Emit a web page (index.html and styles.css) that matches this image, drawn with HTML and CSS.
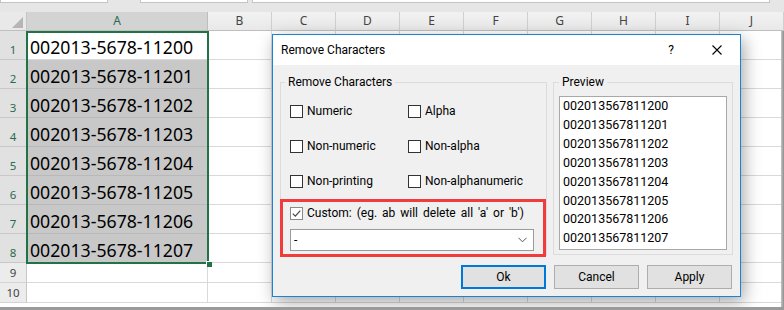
FILE: index.html
```html
<!DOCTYPE html>
<html>
<head>
<meta charset="utf-8">
<link rel="stylesheet" href="styles.css">
</head>
<body>
<div class="app">
  <div class="ribbon">
    <div class="rbox w1"></div>
    <div class="rbox w2"></div>
    <div class="rbox w3"></div>
  </div>
  <div class="sheet">
    <div class="ch corner"><span class="tri"></span></div>
    <div class="ch on">A</div>
    <div class="ch">B</div><div class="ch">C</div><div class="ch">D</div><div class="ch">E</div><div class="ch">F</div><div class="ch">G</div><div class="ch">H</div><div class="ch">I</div><div class="ch">J</div>

    <div class="rh on">1</div><div class="c a">002013-5678-11200</div>
    <div class="c"></div><div class="c"></div><div class="c"></div><div class="c"></div><div class="c"></div><div class="c"></div><div class="c"></div><div class="c"></div><div class="c"></div>

    <div class="rh on">2</div><div class="c a sel">002013-5678-11201</div>
    <div class="c"></div><div class="c"></div><div class="c"></div><div class="c"></div><div class="c"></div><div class="c"></div><div class="c"></div><div class="c"></div><div class="c"></div>

    <div class="rh on">3</div><div class="c a sel">002013-5678-11202</div>
    <div class="c"></div><div class="c"></div><div class="c"></div><div class="c"></div><div class="c"></div><div class="c"></div><div class="c"></div><div class="c"></div><div class="c"></div>

    <div class="rh on">4</div><div class="c a sel">002013-5678-11203</div>
    <div class="c"></div><div class="c"></div><div class="c"></div><div class="c"></div><div class="c"></div><div class="c"></div><div class="c"></div><div class="c"></div><div class="c"></div>

    <div class="rh on">5</div><div class="c a sel">002013-5678-11204</div>
    <div class="c"></div><div class="c"></div><div class="c"></div><div class="c"></div><div class="c"></div><div class="c"></div><div class="c"></div><div class="c"></div><div class="c"></div>

    <div class="rh on">6</div><div class="c a sel">002013-5678-11205</div>
    <div class="c"></div><div class="c"></div><div class="c"></div><div class="c"></div><div class="c"></div><div class="c"></div><div class="c"></div><div class="c"></div><div class="c"></div>

    <div class="rh on">7</div><div class="c a sel">002013-5678-11206</div>
    <div class="c"></div><div class="c"></div><div class="c"></div><div class="c"></div><div class="c"></div><div class="c"></div><div class="c"></div><div class="c"></div><div class="c"></div>

    <div class="rh on">8</div><div class="c a sel">002013-5678-11207</div>
    <div class="c"></div><div class="c"></div><div class="c"></div><div class="c"></div><div class="c"></div><div class="c"></div><div class="c"></div><div class="c"></div><div class="c"></div>

    <div class="rh">9</div><div class="c"></div>
    <div class="c"></div><div class="c"></div><div class="c"></div><div class="c"></div><div class="c"></div><div class="c"></div><div class="c"></div><div class="c"></div><div class="c"></div>

    <div class="rh">10</div><div class="c"></div>
    <div class="c"></div><div class="c"></div><div class="c"></div><div class="c"></div><div class="c"></div><div class="c"></div><div class="c"></div><div class="c"></div><div class="c"></div>
  </div>

  <div class="selection"><span class="handle"></span></div>

  <div class="dialog">
    <div class="titlebar">
      <span class="title">Remove Characters</span>
      <span class="help">?</span>
      <svg class="close" width="10" height="10" viewBox="0 0 10 10"><path d="M0.5 0.5 L9.5 9.5 M9.5 0.5 L0.5 9.5" stroke="#000" stroke-width="1.1" fill="none"/></svg>
    </div>
    <div class="dbody">
      <div class="groups">
        <div class="group g-left">
          <div class="legend lg-left">Remove Characters</div>
          <div class="opts">
            <div class="opt"><span class="cb"></span>Numeric</div>
            <div class="opt"><span class="cb"></span>Alpha</div>
            <div class="opt"><span class="cb"></span>Non-numeric</div>
            <div class="opt"><span class="cb"></span>Non-alpha</div>
            <div class="opt"><span class="cb"></span>Non-printing</div>
            <div class="opt"><span class="cb"></span>Non-alphanumeric</div>
          </div>
          <div class="custom">
            <div class="opt custom-row">
              <span class="cb checked"><svg width="11" height="11" viewBox="0 0 11 11"><path d="M1.8 5.6 L4.3 8.2 L9.3 2.6" stroke="#444" stroke-width="1.2" fill="none"/></svg></span><span class="custom-text">Custom: (eg. ab will delete all 'a' or 'b')</span>
            </div>
            <div class="combo">
              <span class="combo-val">-</span>
              <svg width="9" height="6" viewBox="0 0 9 6"><path d="M0.5 0.8 L4.5 4.8 L8.5 0.8" stroke="#555" stroke-width="1" fill="none"/></svg>
            </div>
          </div>
        </div>
        <div class="group g-right">
          <div class="legend lg-right">Preview</div>
          <div class="listbox">
            <div>002013567811200</div>
            <div>002013567811201</div>
            <div>002013567811202</div>
            <div>002013567811203</div>
            <div>002013567811204</div>
            <div>002013567811205</div>
            <div>002013567811206</div>
            <div>002013567811207</div>
          </div>
        </div>
      </div>
      <div class="btns">
        <div class="btn default">Ok</div>
        <div class="btn">Cancel</div>
        <div class="btn">Apply</div>
      </div>
    </div>
  </div>

  <div class="edge-r"></div>
  <div class="edge-b"></div>
</div>
</body>
</html>
```
FILE: styles.css
```css
html, body {
  margin: 0;
  padding: 0;
}
body {
  width: 784px;
  height: 310px;
  overflow: hidden;
  background: #fff;
  font-family: "Noto Sans", "Open Sans", sans-serif;
}
.app {
  position: relative;
  width: 784px;
  height: 310px;
  overflow: hidden;
  background: #fff;
}

/* top strip */
.ribbon {
  height: 12px;
  background: #e6e6e6;
  display: flex;
  align-items: flex-start;
  gap: 0;
}
.rbox {
  height: 2px;
  background: #fff;
  border: 1px solid #c4c4c4;
  border-top: 0;
}
.w1 { width: 106px; }
.w2 { width: 106px; margin-left: 32px; }
.w3 { width: 516px; margin-left: 4px; }

/* sheet grid */
.sheet {
  display: grid;
  grid-template-columns: 27px 181px repeat(9, 64px);
  grid-template-rows: 19px repeat(8, 29px) repeat(2, 20px) 4px;
}
.ch {
  box-sizing: border-box;
  background: linear-gradient(#f2f2f2, #e9e9e9);
  border-right: 1px solid #d0d0d0;
  border-bottom: 1px solid #bfbfbf;
  font-size: 12px;
  color: #444;
  display: flex;
  align-items: center;
  justify-content: center;
  line-height: 1;
}
.ch.on {
  background: #d3d3d3;
  color: #2a6a4c;
  border-right-color: #bdbdbd;
}
.ch.corner {
  background: #e9e9e9;
  border-right-color: #c6c6c6;
  justify-content: flex-end;
  align-items: flex-end;
  padding: 0 3px 2px 0;
}
.tri {
  width: 0;
  height: 0;
  border-left: 11px solid transparent;
  border-bottom: 11px solid #b5b5b5;
}
.rh {
  box-sizing: border-box;
  background: #ececec;
  border-right: 1px solid #c6c6c6;
  border-bottom: 1px solid #d4d4d4;
  font-size: 11.5px;
  line-height: 14px;
  color: #444;
  display: flex;
  align-items: flex-end;
  justify-content: center;
  padding-bottom: 2px;
}
.rh.on {
  background: #e1e1e1;
  color: #2a6a4c;
  border-bottom-color: #c8c8c8;
}
.c {
  box-sizing: border-box;
  border-right: 1px solid #d9d9d9;
  border-bottom: 1px solid #d9d9d9;
}
.c.a {
  font-size: 17.7px;
  line-height: 20px;
  padding: 6px 0 0 3px;
  white-space: nowrap;
  color: #000;
  overflow: hidden;
}
.c.sel {
  background: #c8c8c8;
  border-bottom-color: #b9b9b9;
}

/* selection overlay */
.selection {
  position: absolute;
  left: 26px;
  top: 31px;
  width: 183px;
  height: 233px;
  box-sizing: border-box;
  border: 2px solid #217346;
}
.handle {
  position: absolute;
  right: -5px;
  bottom: -5px;
  width: 6px;
  height: 6px;
  box-sizing: border-box;
  background: #217346;
  border-left: 1px solid #fff;
  border-top: 1px solid #fff;
}

/* dialog */
.dialog {
  position: absolute;
  left: 272px;
  top: 34px;
  width: 469px;
  height: 263px;
  box-sizing: border-box;
  border: 1px solid #1883d7;
  background: #f0f0f0;
  box-shadow: 3px 5px 16px rgba(0, 0, 0, 0.35);
  font-family: Roboto, "Noto Sans", sans-serif;
  font-size: 12px;
  color: #000;
  display: flex;
  flex-direction: column;
}
.titlebar {
  flex: none;
  height: 30px;
  background: #fff;
  display: flex;
  align-items: center;
  padding: 0 18px 0 8px;
}
.title {
  flex: 1;
}
.help {
  margin-right: 38px;
  font-size: 12px;
}
.close {
  display: block;
}
.dbody {
  flex: 1;
  padding: 17px 7px 0 7px;
  display: flex;
  flex-direction: column;
}
.groups {
  display: flex;
  gap: 6px;
  align-items: flex-start;
}
.group {
  box-sizing: border-box;
  border: 1px solid #dcdcdc;
}
.g-left {
  width: 267px;
  height: 174px;
  padding-left: 9px;
}
.g-right {
  width: 180px;
  height: 173px;
  padding-left: 5px;
}
.legend {
  width: fit-content;
  margin-top: -9px;
  padding: 0 3px;
  background: #f0f0f0;
  line-height: 16px;
  white-space: nowrap;
}
.lg-left { margin-left: -5px; }
.lg-right { margin-left: 0; }

.opts {
  display: grid;
  grid-template-columns: 118px 1fr;
  grid-auto-rows: 22px;
  row-gap: 13px;
  margin-top: 10px;
}
.opt {
  display: flex;
  align-items: center;
  gap: 4px;
  white-space: nowrap;
}
.cb {
  flex: none;
  width: 13px;
  height: 13px;
  box-sizing: border-box;
  border: 1px solid #333;
  background: #fff;
  display: flex;
  align-items: center;
  justify-content: center;
}
.cb.checked {
  border-color: #8a8a8a;
}
.cb svg {
  display: block;
}
.custom {
  margin: 7px 0 0 -10px;
  width: 266px;
  height: 58px;
  box-sizing: border-box;
  border: 3px solid #f03c3c;
  padding-left: 7px;
  position: relative;
}
.custom-row {
  height: 22px;
}
.custom-text {
  word-spacing: 2px;
}
.combo {
  margin-top: 5px;
  width: 244px;
  height: 22px;
  box-sizing: border-box;
  border: 1px solid #9a9a9a;
  background: #fff;
  display: flex;
  align-items: center;
  justify-content: space-between;
  padding: 0 6px 0 3px;
}
.combo svg {
  display: block;
}
.listbox {
  margin-top: 6px;
  width: 168px;
  height: 154px;
  box-sizing: border-box;
  border: 1px solid #a8a8a8;
  background: #fff;
  font-size: 12.5px;
  line-height: 18.9px;
  padding-left: 3px;
  overflow: hidden;
}
.btns {
  display: flex;
  justify-content: flex-end;
  gap: 8px;
  margin-top: 9px;
  padding-right: 1px;
}
.btn {
  width: 85px;
  height: 24px;
  box-sizing: border-box;
  border: 1px solid #adadad;
  background: #e1e1e1;
  display: flex;
  align-items: center;
  justify-content: center;
}
.btn.default {
  border: 2px solid #0078d7;
}

/* screenshot edges */
.edge-r {
  position: absolute;
  right: 0;
  top: 31px;
  bottom: 0;
  width: 3px;
  background: linear-gradient(to right, #c4c4c4, #8e8e8e);
}
.edge-b {
  position: absolute;
  left: 0;
  right: 0;
  bottom: 0;
  height: 3px;
  background: #9a9a9a;
}
```
